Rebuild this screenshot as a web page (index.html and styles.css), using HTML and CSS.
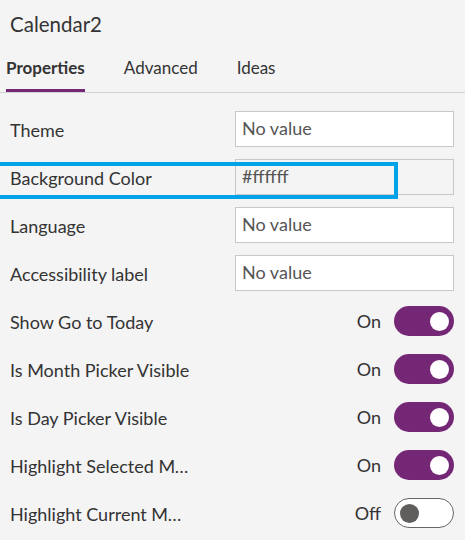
FILE: index.html
```html
<!DOCTYPE html>
<html lang="en">
<head>
<meta charset="utf-8">
<title>Calendar2 properties</title>
<link rel="stylesheet" href="styles.css">
</head>
<body>
<div class="panel">
  <div class="title">Calendar2</div>
  <div class="tabs">
    <div class="tab active">Properties</div>
    <div class="tab">Advanced</div>
    <div class="tab">Ideas</div>
  </div>
  <div class="rows">
    <div class="row">
      <div class="label">Theme</div>
      <div class="field">No value</div>
    </div>
    <div class="row highlight-row">
      <div class="label">Background Color</div>
      <div class="field disabled">#ffffff</div>
      <div class="highlight"></div>
    </div>
    <div class="row">
      <div class="label">Language</div>
      <div class="field">No value</div>
    </div>
    <div class="row">
      <div class="label">Accessibility label</div>
      <div class="field">No value</div>
    </div>
    <div class="row">
      <div class="label">Show Go to Today</div>
      <div class="state">On</div>
      <div class="toggle on"><span class="knob"></span></div>
    </div>
    <div class="row">
      <div class="label">Is Month Picker Visible</div>
      <div class="state">On</div>
      <div class="toggle on"><span class="knob"></span></div>
    </div>
    <div class="row">
      <div class="label">Is Day Picker Visible</div>
      <div class="state">On</div>
      <div class="toggle on"><span class="knob"></span></div>
    </div>
    <div class="row">
      <div class="label">Highlight Selected Month</div>
      <div class="state">On</div>
      <div class="toggle on"><span class="knob"></span></div>
    </div>
    <div class="row">
      <div class="label">Highlight Current Month</div>
      <div class="state">Off</div>
      <div class="toggle off"><span class="knob"></span></div>
    </div>
  </div>
</div>
</body>
</html>
```
FILE: styles.css
```css
html, body {
  margin: 0;
  padding: 0;
}
body {
  background: #f4f4f4;
  font-family: Lato, "Open Sans", "Liberation Sans", sans-serif;
  color: #333333;
  width: 465px;
  height: 540px;
  overflow: hidden;
}
.panel {
  display: flex;
  flex-direction: column;
}
.title {
  font-size: 20.5px;
  line-height: 28px;
  padding: 10px 10px 0 10px;
  color: #333333;
}
.tabs {
  display: flex;
  gap: 39px;
  padding: 19px 0 0 6px;
  border-bottom: 1px solid #d2d2d2;
}
.tab {
  font-size: 17px;
  line-height: 22px;
  padding-bottom: 10px;
  border-bottom: 3px solid transparent;
  color: #333333;
}
.tab.active {
  font-weight: 700;
  border-bottom-color: #742774;
}
.rows {
  display: flex;
  flex-direction: column;
  padding-top: 12px;
}
.row {
  position: relative;
  height: 48px;
  display: flex;
  align-items: center;
  padding: 0 11px 0 10px;
}
.label {
  flex: 1;
  font-size: 18px;
  line-height: 24px;
  padding-top: 2px;
  color: #333333;
  white-space: nowrap;
  overflow: hidden;
  text-overflow: ellipsis;
  max-width: 180px;
  margin-right: auto;
}
.field {
  box-sizing: border-box;
  width: 219px;
  height: 36px;
  border: 1px solid #c8c8c8;
  background: #ffffff;
  font-size: 18px;
  line-height: 32px;
  padding: 0 6px;
  color: #555555;
}
.field.disabled {
  background: #f4f4f4;
}
.highlight {
  position: absolute;
  left: -8px;
  top: 9px;
  width: 406px;
  height: 37px;
  box-sizing: border-box;
  border: 4px solid #00a2e8;
}
.state {
  font-size: 18px;
  color: #333333;
  margin-right: 13px;
}
.toggle {
  box-sizing: border-box;
  width: 60px;
  height: 30px;
  border-radius: 15px;
  display: flex;
  align-items: center;
  padding: 0 5px;
}
.toggle.on {
  background: #742774;
  justify-content: flex-end;
}
.toggle.off {
  background: #ffffff;
  border: 1.5px solid #666666;
  justify-content: flex-start;
  padding: 0 5px;
}
.knob {
  width: 19px;
  height: 19px;
  border-radius: 50%;
}
.toggle.on .knob {
  background: #ffffff;
}
.toggle.off .knob {
  background: #605e5c;
}
```
